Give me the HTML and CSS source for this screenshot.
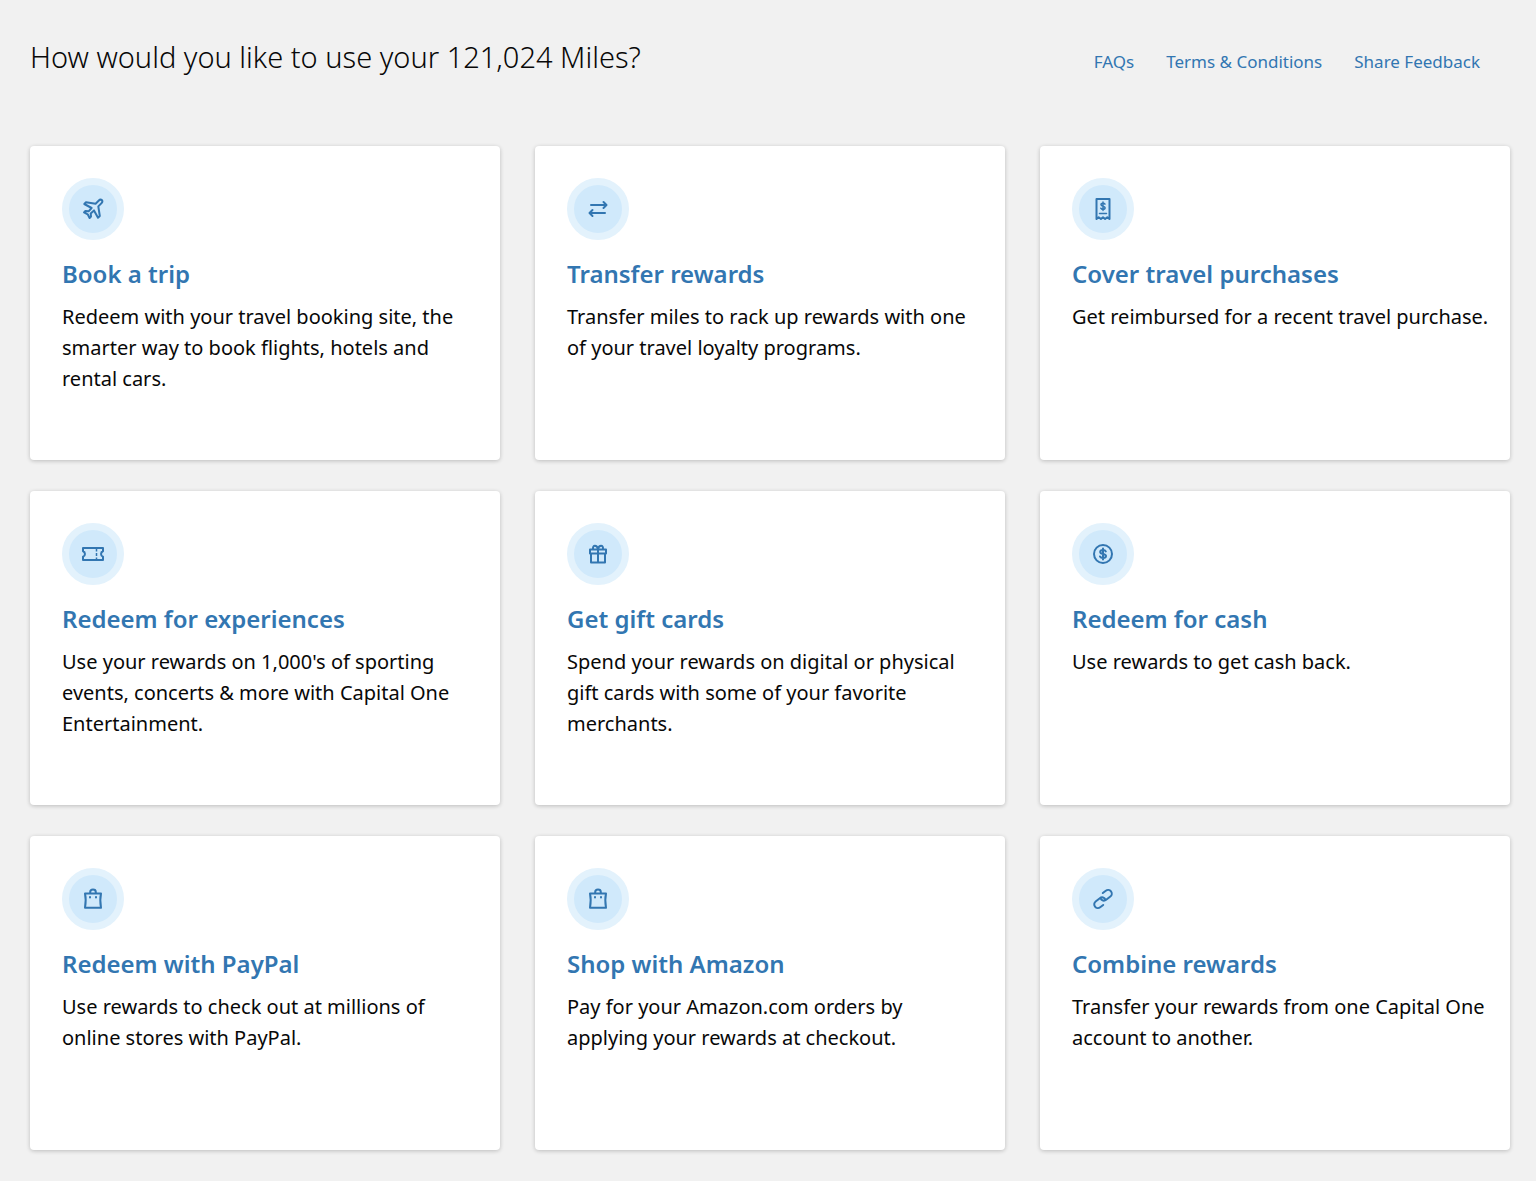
FILE: index.html
```html
<!DOCTYPE html>
<html lang="en">
<head>
<meta charset="utf-8">
<meta name="viewport" content="width=device-width, initial-scale=1">
<title>Use your Miles</title>
<link rel="stylesheet" href="styles.css">
</head>
<body>
<svg class="sprite" aria-hidden="true">
  <symbol id="bag" viewBox="0 0 24 24">
    <path d="M4 6.500h16c-.9 4-.9 9 0 14.300H4c.9-5.300.9-10.300 0-14.300z"/>
    <path d="M9.200 6V5a2.800 2.500 0 0 1 5.600 0v1"/>
    <path d="M9 10v.600M15 10v.600"/>
  </symbol>
</svg>
<header class="top">
  <h1 class="top-title">How would you like to use your 121,024 Miles?</h1>
  <nav class="top-links" aria-label="Help">
    <a href="#faqs">FAQs</a>
    <a href="#terms">Terms &amp; Conditions</a>
    <a href="#feedback">Share Feedback</a>
  </nav>
</header>
<main class="cards">
  <article class="card">
    <span class="badge"><svg class="icon" viewBox="0 0 24 24" aria-hidden="true"><path d="M20.900 3.100c-.9-.7-2.400-.3-3.300.6L14.600 6.700 5 5.200 3.300 7l7.300 4-3 3.300-3.200-.3L3 15.400l3.700 1.900L8.600 21l1.400-1.400-.3-3.200 3.300-3 4 7.300 1.800-1.700-1.500-9.600 3-3c.9-.9 1.300-2.400.6-3.300z"/></svg></span>
    <h2 class="card-title"><a href="#trip">Book a trip</a></h2>
    <p class="card-text">Redeem with your travel booking site, the smarter way to book flights, hotels and rental cars.</p>
  </article>
  <article class="card">
    <span class="badge"><svg class="icon" viewBox="0 0 24 24" aria-hidden="true"><path d="M5 8h15M17.500 5l3 3-3 3M19 16H4M6.500 13l-3 3 3 3"/></svg></span>
    <h2 class="card-title"><a href="#transfer">Transfer rewards</a></h2>
    <p class="card-text">Transfer miles to rack up rewards with one of your travel loyalty programs.</p>
  </article>
  <article class="card">
    <span class="badge"><svg class="icon" viewBox="0 0 24 24" aria-hidden="true"><path d="M5.500 22V2h13v20l-2.200-1.800L14.100 22 12 20.200 9.900 22l-2.200-1.800z"/><path stroke-width="1.500" d="M14 7.200c-.4-.7-1.100-1-2-1-1.100 0-2 .5-2 1.500 0 2 4.100 1 4.100 3.100 0 1-.9 1.600-2.100 1.600-1 0-1.800-.4-2.200-1.200M12 5v8.600M8.500 16.500h7"/></svg></span>
    <h2 class="card-title"><a href="#cover">Cover travel purchases</a></h2>
    <p class="card-text">Get reimbursed for a recent travel purchase.</p>
  </article>
  <article class="card">
    <span class="badge"><svg class="icon" viewBox="0 0 24 24" aria-hidden="true"><path d="M2 6h20v3.200c-2.600.8-2.600 4.800 0 5.600V18H2v-3.200c2.600-.8 2.600-4.800 0-5.600z"/><path stroke-width="1.500" stroke-linecap="butt" stroke-dasharray="3 1.500" d="M15.500 6.500v11"/></svg></span>
    <h2 class="card-title"><a href="#experiences">Redeem for experiences</a></h2>
    <p class="card-text">Use your rewards on 1,000's of sporting events, concerts &amp; more with Capital One Entertainment.</p>
  </article>
  <article class="card">
    <span class="badge"><svg class="icon" viewBox="0 0 24 24" aria-hidden="true"><path d="M4 7.500h16v4H4zM5 11.500h14V20.500H5zM12 7.500v13M12 7C11 2.500 6.500 2.500 7 7M12 7c1-4.500 5.500-4.500 5 0"/></svg></span>
    <h2 class="card-title"><a href="#gift-cards">Get gift cards</a></h2>
    <p class="card-text">Spend your rewards on digital or physical gift cards with some of your favorite merchants.</p>
  </article>
  <article class="card">
    <span class="badge"><svg class="icon" viewBox="0 0 24 24" aria-hidden="true"><circle cx="12" cy="12" r="9"/><path d="M14.800 9.400c-.5-1-1.500-1.400-2.800-1.400-1.600 0-2.800.7-2.800 1.900 0 2.900 5.800 1.300 5.800 4.200 0 1.300-1.300 2-3 2-1.400 0-2.500-.6-3-1.600M12 6.500v11"/></svg></span>
    <h2 class="card-title"><a href="#cash">Redeem for cash</a></h2>
    <p class="card-text">Use rewards to get cash back.</p>
  </article>
  <article class="card">
    <span class="badge"><svg class="icon" aria-hidden="true"><use href="#bag"/></svg></span>
    <h2 class="card-title"><a href="#paypal">Redeem with PayPal</a></h2>
    <p class="card-text">Use rewards to check out at millions of online stores with PayPal.</p>
  </article>
  <article class="card">
    <span class="badge"><svg class="icon" aria-hidden="true"><use href="#bag"/></svg></span>
    <h2 class="card-title"><a href="#amazon">Shop with Amazon</a></h2>
    <p class="card-text">Pay for your Amazon.com orders by applying your rewards at checkout.</p>
  </article>
  <article class="card">
    <span class="badge"><svg class="icon" viewBox="0 0 24 24" aria-hidden="true"><path transform="rotate(-38 12 12)" d="M8.500 16.800H4.700a3.700 3.700 0 0 1 0-7.400H10a3.700 3.700 0 0 1 3.600 4.600M15.500 7.200h3.800a3.700 3.700 0 0 1 0 7.400H14a3.700 3.700 0 0 1-3.600-4.600"/></svg></span>
    <h2 class="card-title"><a href="#combine">Combine rewards</a></h2>
    <p class="card-text">Transfer your rewards from one Capital One account to another.</p>
  </article>
</main>
</body>
</html>
```
FILE: styles.css
```css
* {
  box-sizing: border-box;
}

body {
  margin: 0;
  padding: 32px 26px 30px 30px;
  background: #f1f1f1;
  color: #080808;
  font-family: "Noto Sans", "Open Sans", sans-serif;
}

a {
  color: #3276b1;
  text-decoration: none;
}

a:hover {
  text-decoration: underline;
}

.sprite {
  position: absolute;
  width: 0;
  height: 0;
}

.top {
  display: flex;
  align-items: center;
  justify-content: space-between;
  flex-wrap: wrap;
  gap: 16px 32px;
  margin-bottom: 64px;
  padding-right: 30px;
}

.top-title {
  margin: 0;
  font-size: 29px;
  line-height: 50px;
  font-weight: 300;
}

.top-links {
  display: flex;
  flex-wrap: wrap;
  gap: 32px;
  padding-top: 10px;
  font-size: 17px;
  line-height: 24px;
}

.cards {
  display: grid;
  grid-template-columns: repeat(3, minmax(0, 1fr));
  gap: 31px 35px;
}

.card {
  min-height: 314px;
  padding: 32px 20px 32px 32px;
  border-radius: 4px;
  background: #fff;
  box-shadow: 0 1px 4px rgba(0, 0, 0, 0.22);
}

.badge {
  display: flex;
  align-items: center;
  justify-content: center;
  width: 62px;
  height: 62px;
  border: 7px solid #e3f2fc;
  border-radius: 50%;
  background: #d0e9fb;
}

.icon {
  width: 24px;
  height: 24px;
  fill: none;
  stroke: #3276b1;
  stroke-width: 2;
  stroke-linejoin: round;
  stroke-linecap: round;
}

.card-title {
  margin: 17px 0 10px;
  font-size: 24px;
  line-height: 34px;
  font-weight: 600;
}

.card-text {
  margin: 0;
  font-size: 20px;
  line-height: 31px;
}

@media (max-width: 1000px) {
  .cards {
    grid-template-columns: repeat(auto-fit, minmax(280px, 1fr));
  }
}
```
